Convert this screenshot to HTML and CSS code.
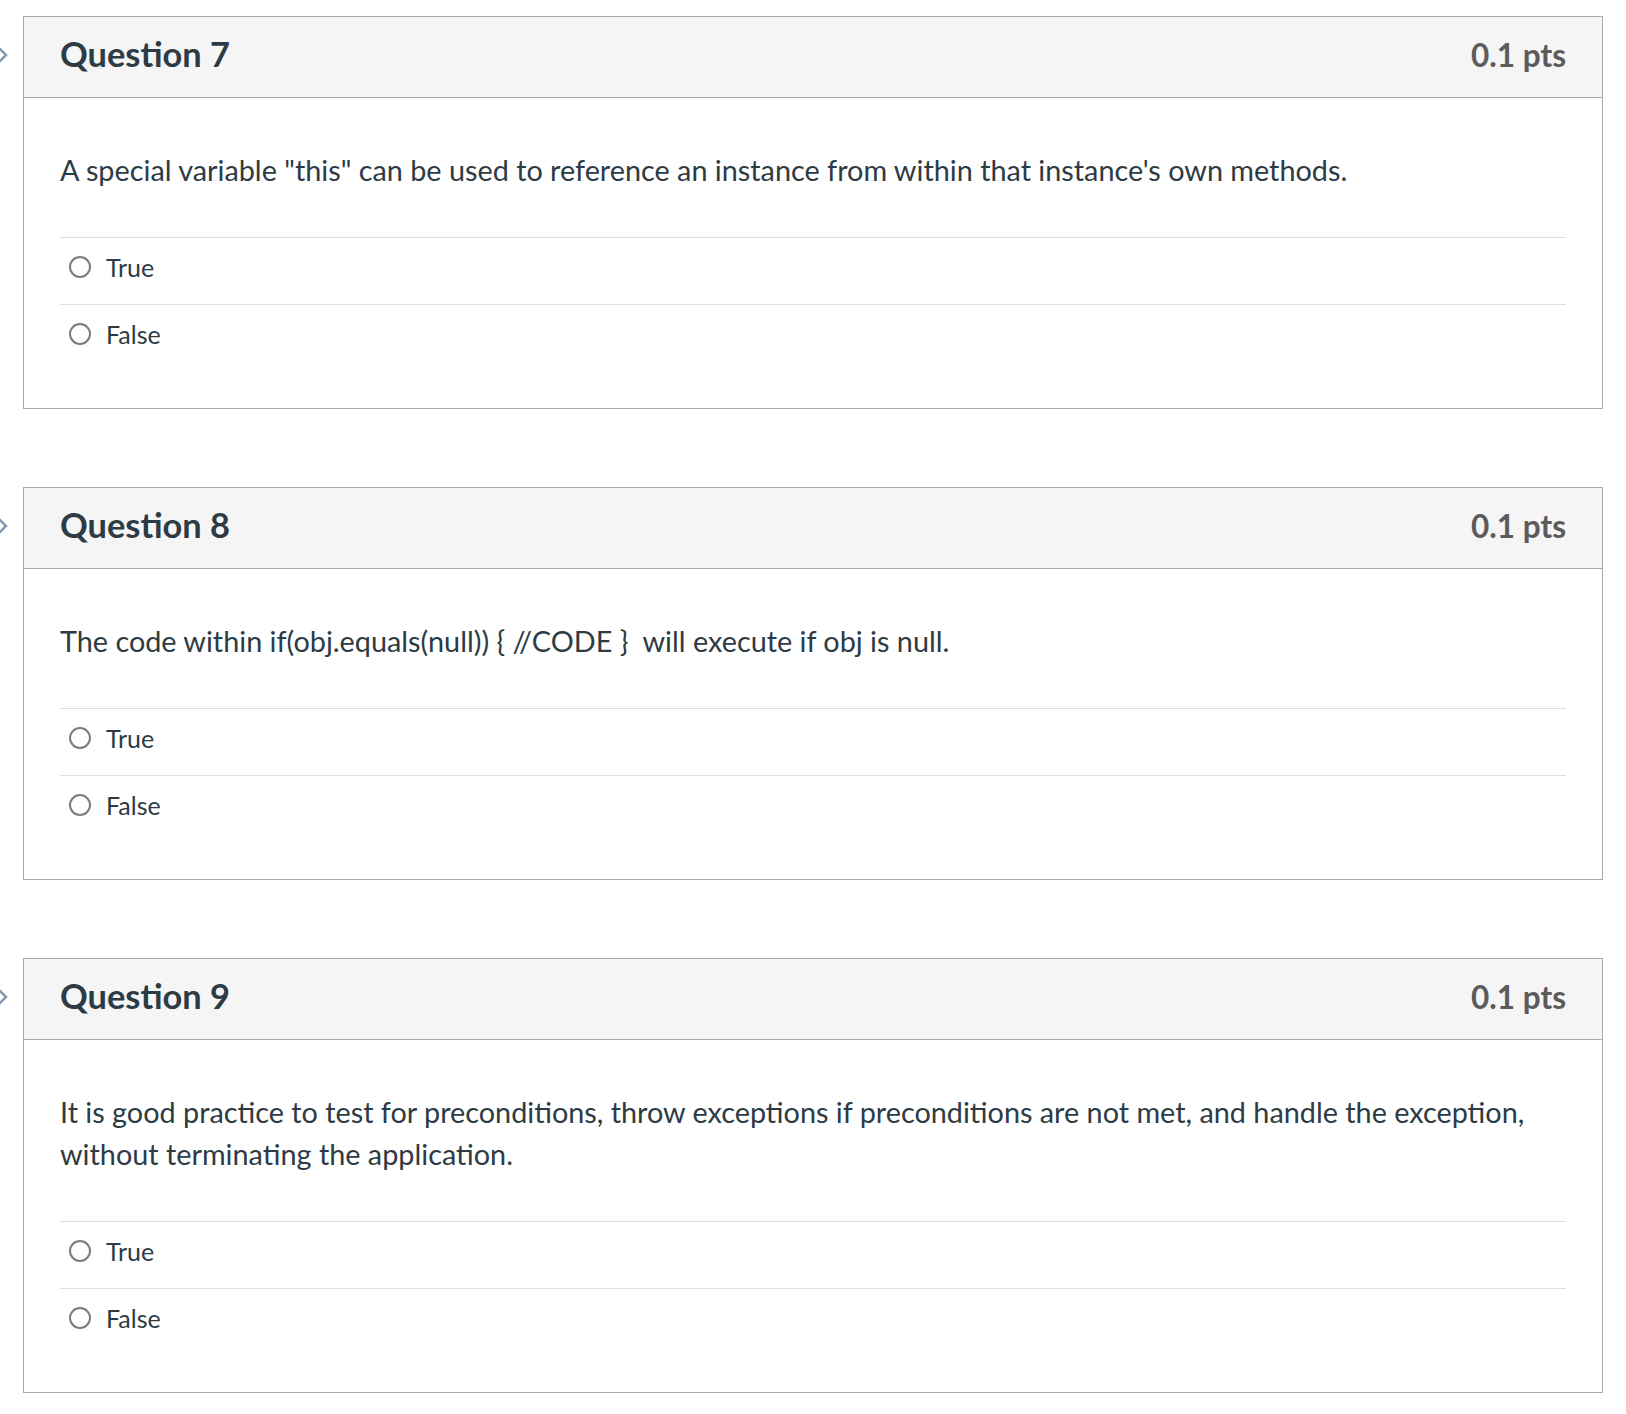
FILE: index.html
```html
<!DOCTYPE html>
<html lang="en">
<head>
<meta charset="utf-8">
<title>Quiz</title>
<link rel="stylesheet" href="styles.css">
</head>
<body>
<div class="quiz">
  <div class="question">
    <svg class="nav-arrow" width="10" height="22" viewBox="0 0 10 22"><path d="M-3 2 L6 11 L-3 20" fill="none" stroke="#8299b0" stroke-width="2.5"/></svg>
    <div class="card">
      <div class="card-header">
        <h2 class="title">Question 7</h2>
        <span class="pts">0.1 pts</span>
      </div>
      <div class="card-body">
        <p class="qtext">A special variable "this" can be used to reference an instance from within that instance's own methods.</p>
        <div class="answers">
          <label class="answer"><span class="radio"></span><span class="label">True</span></label>
          <label class="answer"><span class="radio"></span><span class="label">False</span></label>
        </div>
      </div>
    </div>
  </div>
  <div class="question">
    <svg class="nav-arrow" width="10" height="22" viewBox="0 0 10 22"><path d="M-3 2 L6 11 L-3 20" fill="none" stroke="#8299b0" stroke-width="2.5"/></svg>
    <div class="card">
      <div class="card-header">
        <h2 class="title">Question 8</h2>
        <span class="pts">0.1 pts</span>
      </div>
      <div class="card-body">
        <p class="qtext">The code within if(obj.equals(null)) { //CODE }&nbsp; will execute if obj is null.</p>
        <div class="answers">
          <label class="answer"><span class="radio"></span><span class="label">True</span></label>
          <label class="answer"><span class="radio"></span><span class="label">False</span></label>
        </div>
      </div>
    </div>
  </div>
  <div class="question">
    <svg class="nav-arrow" width="10" height="22" viewBox="0 0 10 22"><path d="M-3 2 L6 11 L-3 20" fill="none" stroke="#8299b0" stroke-width="2.5"/></svg>
    <div class="card">
      <div class="card-header">
        <h2 class="title">Question 9</h2>
        <span class="pts">0.1 pts</span>
      </div>
      <div class="card-body">
        <p class="qtext">It is good practice to test for preconditions, throw exceptions if preconditions are not met, and handle the exception, without terminating the application.</p>
        <div class="answers">
          <label class="answer"><span class="radio"></span><span class="label">True</span></label>
          <label class="answer"><span class="radio"></span><span class="label">False</span></label>
        </div>
      </div>
    </div>
  </div>
</div>
</body>
</html>
```

FILE: styles.css
```css
html, body {
  margin: 0;
  padding: 0;
  background: #ffffff;
}

body {
  font-family: Lato, "Open Sans", "Liberation Sans", sans-serif;
  color: #2d3b45;
}

.quiz {
  display: flex;
  flex-direction: column;
  gap: 78px;
  padding: 16px 23px 20px 23px;
}

.question {
  position: relative;
}

.nav-arrow {
  position: absolute;
  left: -23px;
  top: 28px;
}

.card {
  border: 1px solid #a9a9a9;
  background: #ffffff;
}

.card-header {
  display: flex;
  align-items: center;
  justify-content: space-between;
  height: 81px;
  box-sizing: border-box;
  padding: 0 36px 6px 36px;
  background: #f5f5f5;
  border-bottom: 1px solid #a9a9a9;
}

.title {
  margin: 0;
  font-size: 34.4px;
  font-weight: 700;
  line-height: 1.2;
  color: #2d3b45;
}

.pts {
  margin-top: 4px;
  font-size: 31.5px;
  font-weight: 700;
  line-height: 1.2;
  color: #5b5b5b;
}

.card-body {
  padding: 51px 36px 37px 36px;
}

.qtext {
  margin: 0;
  font-size: 28.8px;
  line-height: 42px;
  color: #2d3b45;
}

.answers {
  margin-top: 46px;
  display: flex;
  flex-direction: column;
}

.answer {
  display: flex;
  align-items: center;
  gap: 15px;
  height: 67px;
  box-sizing: border-box;
  padding: 0 0 8px 9px;
  border-top: 1px solid #dddddd;
  font-size: 25px;
  line-height: 39px;
  color: #2d3b45;
}

.radio {
  flex: none;
  width: 22px;
  height: 22px;
  box-sizing: border-box;
  border: 2px solid #7b7b7b;
  border-radius: 50%;
  background: #ffffff;
}
```
